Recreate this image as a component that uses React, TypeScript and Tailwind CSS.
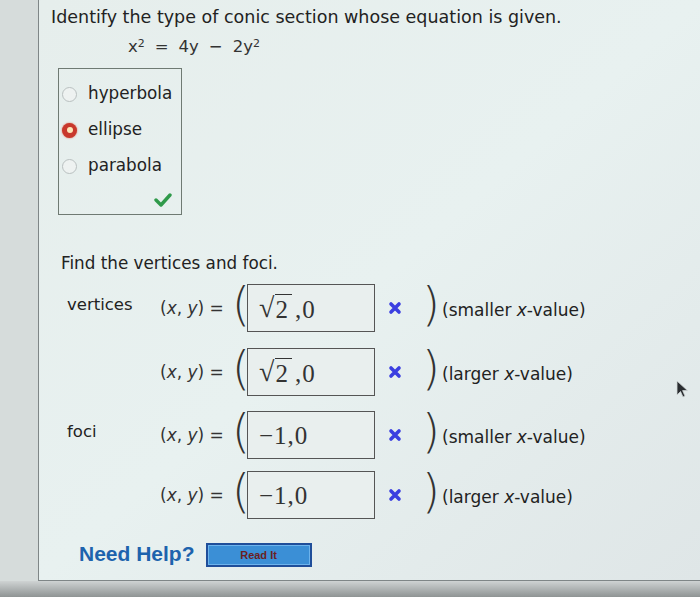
import React from 'react';

type Row = { label?: string; value: 'sqrt' | 'neg'; note: string; top: string };

const ROWS: Row[] = [
    { label: 'vertices', value: 'sqrt', note: 'smaller', top: 'mt-[8px]' },
    { value: 'sqrt', note: 'larger', top: 'mt-[16px]' },
    { label: 'foci', value: 'neg', note: 'smaller', top: 'mt-[15px]' },
    { value: 'neg', note: 'larger', top: 'mt-[12px]' },
];

const Radio: React.FC<{ checked?: boolean }> = ({ checked }) =>
    checked ? (
        <span className="w-[15px] h-[15px] rounded-full bg-[#c8382c] flex items-center justify-center shadow-[0_0_2px_#e06a50]">
            <span className="w-[6px] h-[6px] rounded-full bg-[#fde7b8]" />
        </span>
    ) : (
        <span className="w-[15px] h-[15px] rounded-full border border-[#b9c0c0] bg-[#eef2f1]" />
    );

const Cross = () => (
    <svg width="14" height="14" viewBox="0 0 14 14">
        <path d="M3 3 L11 11 M11 3 L3 11" stroke="#3b3fe0" strokeWidth="3.6" strokeLinecap="round" />
    </svg>
);

const Answer: React.FC<{ value: Row['value'] }> = ({ value }) => (
    <span className="font-['Liberation_Serif',serif] text-[25px] text-[#333] leading-none flex items-end tracking-[1px]">
        {value === 'sqrt' ? (
            <>
                <span className="text-[28px] leading-none">√</span>
                <span className="border-t border-[#333] pt-[2px] pr-[3px]">2</span>
                <span className="ml-[3px]">,0</span>
            </>
        ) : (
            <span>−1,0</span>
        )}
    </span>
);

const App: React.FC = () => {
    return (
        <div className="w-[700px] h-[597px] overflow-hidden flex flex-col bg-gradient-to-r from-[#d9dfde] via-[#e4ecea] to-[#e6eeee] font-['DejaVu_Sans',sans-serif] text-[#222] relative">
            <div className="flex flex-1">
                <div className="w-[38px] shrink-0 bg-[#d6dcdb]" />
                <div className="flex-1 border-l border-b border-[#7f8687] h-[581px] pl-[12px] bg-gradient-to-br from-[#e6eeec] via-[#e8f1f0] to-[#dfe6e7]">
                    <div className="mt-[4px] text-[17.5px]">
                        Identify the type of conic section whose equation is given.
                    </div>
                    <div className="ml-[77px] mt-[5px] text-[16.5px] text-[#333] flex gap-[10px]">
                        <span>x<sup className="text-[11px]">2</sup></span>
                        <span>=</span>
                        <span>4y</span>
                        <span>−</span>
                        <span>2y<sup className="text-[11px]">2</sup></span>
                    </div>
                    <div className="ml-[7px] mt-[8px] w-[124px] h-[147px] border border-[#6f7a73] flex flex-col pt-[7px]">
                        {[
                            { t: 'hyperbola', c: false },
                            { t: 'ellipse', c: true },
                            { t: 'parabola', c: false },
                        ].map((o) => (
                            <div key={o.t} className="flex items-center h-[36px] pl-[3px] gap-[11px] text-[16.8px]">
                                <span className="w-[15px] flex justify-center">
                                    <Radio checked={o.c} />
                                </span>
                                {o.t}
                            </div>
                        ))}
                        <div className="flex justify-end pr-[9px] mt-[9px]">
                            <svg width="18" height="14" viewBox="0 0 18 14">
                                <path d="M2 7 L7 12 L16 2" stroke="#2f9a4a" strokeWidth="3.4" fill="none" strokeLinecap="round" strokeLinejoin="round" />
                            </svg>
                        </div>
                    </div>
                    <div className="mt-[36px] ml-[10px] text-[16.8px]">Find the vertices and foci.</div>
                    {ROWS.map((r, i) => (
                        <div key={i} className={`flex items-center ml-[16px] ${r.top}`}>
                            <span className="w-[93px] text-[16.5px] -mt-[6px]">{r.label}</span>
                            <span className="w-[72px] text-[17px] text-[#333] mt-[2px]">
                                (<i>x</i>, <i>y</i>) =
                            </span>
                            <span className="font-extralight text-[46px] leading-none text-[#333] -mt-[8px] w-[15px]">(</span>
                            <div className="w-[128px] h-[48px] border border-[#555] flex items-center pl-[11px] bg-[#e9efee]">
                                <Answer value={r.value} />
                            </div>
                            <span className="ml-[13px] w-[14px] flex items-center">
                                <Cross />
                            </span>
                            <span className="ml-[20px] font-extralight text-[46px] leading-none text-[#333] -mt-[8px] w-[12px]">)</span>
                            <span className="ml-[8px] text-[17px] mt-[5px]">
                                (<span>{r.note}</span> <i>x</i>-value)
                            </span>
                        </div>
                    ))}
                    <div className="flex items-center ml-[28px] mt-[21px] gap-[11px]">
                        <span className="font-['Liberation_Sans',sans-serif] font-bold text-[21px] text-[#1d63ad] -mt-[2px]">Need Help?</span>
                        <span className="w-[106px] h-[24px] bg-[#3b8fd6] border-2 border-[#1f4e9a] flex items-center justify-center shadow-[inset_0_0_0_1px_#6db3ec]">
                            <span className="font-['Liberation_Sans',sans-serif] font-bold text-[11px] text-[#6a1f22]">Read It</span>
                        </span>
                    </div>
                </div>
            </div>
            <div className="h-[16px] bg-gradient-to-b from-[#cfd3d3] to-[#8f9494]" />
            <svg className="absolute left-[676px] top-[380px]" width="14" height="20" viewBox="0 0 14 20">
                <path d="M1 1 L1 15 L4.5 11.5 L7 17 L9 16 L6.6 10.6 L11.5 10.6 Z" fill="#2a2d31" stroke="#cfd6d6" strokeWidth="0.8" />
            </svg>
        </div>
    );
};

export default App;
